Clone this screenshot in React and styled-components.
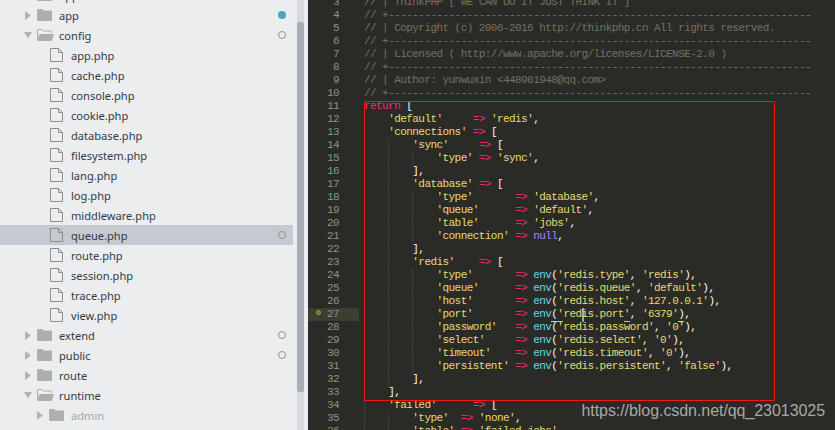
import React from 'react'
import styled, { createGlobalStyle } from 'styled-components'

const CHAR = 6.04

const GlobalStyle = createGlobalStyle`
  html, body { margin: 0; padding: 0; height: 100%; overflow: hidden; }
  #root { height: 100%; }
`

const Page = styled.div`
  display: flex;
  height: 430px;
  overflow: hidden;
`

// sidebar
const Sidebar = styled.aside`
  display: flex;
  flex: 0 0 308px;
  background: #ebedef;
  overflow: hidden;
`
const Tree = styled.ul`
  flex: 1;
  list-style: none;
  margin: -15px 4px 0 0;
  padding: 0;
  font-family: "Noto Sans", sans-serif;
  font-size: 11.1px;
  color: #333a48;
`
const Row = styled.li`
  display: flex;
  align-items: center;
  height: 20px;
  padding: 0 7px 0 ${props => 25 + props.$depth * 12}px;
  background: ${props => (props.$active ? '#c5c9d0' : 'transparent')};
  color: ${props => (props.$muted ? '#a2a5aa' : 'inherit')};
`
const ArrowSlot = styled.span`
  display: flex;
  align-items: center;
  flex: 0 0 12px;
`
const IconSlot = styled.span`
  display: flex;
  align-items: center;
  flex: 0 0 22px;
`
const Status = styled.span`
  box-sizing: border-box;
  width: 8px;
  height: 8px;
  margin-left: auto;
  border-radius: 50%;
  background: ${props => (props.$kind === 'new' ? '#4ba7bc' : 'transparent')};
  border: ${props => (props.$kind === 'new' ? 'none' : '1.5px solid #8f9091')};
`
const ScrollTrack = styled.div`
  flex: 0 0 7px;
  margin-right: 4px;
  background: #d8dadd;
`
const ScrollThumb = styled.div`
  height: 370px;
  margin-top: 22px;
  border-radius: 2px;
  background: #a9adb5;
`

const ArrowRight = () => (
  <svg width="7" height="9" viewBox="0 0 7 9"><path d="M0 0 L6 4.5 L0 9 Z" fill="#b3b3b3" /></svg>
)
const ArrowDown = () => (
  <svg width="8" height="7" viewBox="0 0 8 7" style={{ marginLeft: -1 }}><path d="M0 0 H8 L4 6.5 Z" fill="#b3b3b3" /></svg>
)
const FolderClosed = () => (
  <svg width="15" height="12" viewBox="0 0 15 12">
    <path d="M1 0 H5.5 L6.5 1.5 H14 Q15 1.5 15 2.5 V11 Q15 12 14 12 H1 Q0 12 0 11 V1 Q0 0 1 0 Z" fill="#aeaeae" />
  </svg>
)
const FolderOpen = () => (
  <svg width="17" height="12" viewBox="0 0 17 12">
    <path d="M.5 11 V1.2 Q.5 .5 1.2 .5 H5.3 L6.3 2 H13.5 Q14.5 2 14.5 3 V4" fill="none" stroke="#aeaeae" />
    <path d="M2.8 5 H16.5 Q17 5 16.8 5.6 L15 11.2 Q14.8 12 14 12 H1 Q.3 12 .6 11 L2 5.8 Q2.2 5 2.8 5 Z" fill="#aeaeae" />
  </svg>
)
const FileIcon = () => (
  <svg width="14" height="14" viewBox="0 0 14 14" style={{ marginLeft: 1 }}>
    <path d="M.5 .5 H8.5 L12.5 4.5 V13.5 H.5 Z M8.5 .5 V4.5 H12.5" fill="none" stroke="#8d8e90" />
  </svg>
)

const treeRows = [
  { name: 'application', type: 'closed', depth: 0 },
  { name: 'app', type: 'closed', depth: 0, status: 'new' },
  { name: 'config', type: 'open', depth: 0, status: 'changed' },
  { name: 'app.php', depth: 1 },
  { name: 'cache.php', depth: 1 },
  { name: 'console.php', depth: 1 },
  { name: 'cookie.php', depth: 1 },
  { name: 'database.php', depth: 1 },
  { name: 'filesystem.php', depth: 1 },
  { name: 'lang.php', depth: 1 },
  { name: 'log.php', depth: 1 },
  { name: 'middleware.php', depth: 1 },
  { name: 'queue.php', depth: 1, status: 'changed', active: true },
  { name: 'route.php', depth: 1 },
  { name: 'session.php', depth: 1 },
  { name: 'trace.php', depth: 1 },
  { name: 'view.php', depth: 1 },
  { name: 'extend', type: 'closed', depth: 0, status: 'changed' },
  { name: 'public', type: 'closed', depth: 0, status: 'changed' },
  { name: 'route', type: 'closed', depth: 0 },
  { name: 'runtime', type: 'open', depth: 0 },
  { name: 'admin', type: 'closed', depth: 1, muted: true },
]

// editor
const Editor = styled.main`
  position: relative;
  flex: 1;
  background: #2a2b26;
  overflow: hidden;
`
const Lines = styled.div`
  margin-top: -4px;
  font-family: "Liberation Mono", monospace;
  font-size: 11px;
  letter-spacing: -0.56px;
  line-height: 13px;
  white-space: pre;
`
const LineRow = styled.div`
  display: flex;
  height: 13px;
`
const Gutter = styled.div`
  position: relative;
  flex: 0 0 51px;
  box-sizing: border-box;
  padding-right: 20px;
  margin-right: 5px;
  text-align: right;
  color: #8f908a;
  background: ${props => (props.$current ? '#3e3d32' : 'transparent')};
`
const Marker = styled.svg`
  position: absolute;
  left: 8px;
  top: 2px;
`
const Guide = styled.span`
  display: inline-block;
  box-sizing: border-box;
  width: ${CHAR * 4}px;
  height: 13px;
  vertical-align: top;
  border-left: 1px dotted #4c4c45;
`
const tokenColors = {
  comment: '#75715e',
  string: '#e6db74',
  operator: '#f92672',
  support: '#66d9ef',
  constant: '#ae81ff',
  plain: '#f8f8f2',
}
const Tok = styled.span`
  color: ${props => tokenColors[props.$kind]};
`
const Match = styled.span`
  display: inline-block;
  line-height: 13px;
  box-shadow: 0 1px 0 ${props => props.$color};
`
const Caret = styled.span`
  display: inline-block;
  width: 2px;
  height: 14px;
  margin-right: -2px;
  vertical-align: top;
  background: #a5a5a0;
`
const RedBox = styled.div`
  position: absolute;
  left: 56px;
  top: 101px;
  box-sizing: border-box;
  width: 411px;
  height: 300px;
  border: 1px solid #f5180f;
  border-radius: 1px;
`
const Watermark = styled.div`
  position: absolute;
  right: 10px;
  top: 402px;
  font-family: "Liberation Sans", sans-serif;
  font-size: 16px;
  letter-spacing: -0.06px;
  line-height: 18px;
  color: #a8a8a8;
`

const DASHES = '// +' + '-'.repeat(70)

const source = [
  [3, 0, '// | ThinkPHP [ WE CAN DO IT JUST THINK IT ]'],
  [4, 0, DASHES],
  [5, 0, '// | Copyright (c) 2006-2016 http://thinkphp.cn All rights reserved.'],
  [6, 0, DASHES],
  [7, 0, '// | Licensed ( http://www.apache.org/licenses/LICENSE-2.0 )'],
  [8, 0, DASHES],
  [9, 0, '// | Author: yunwuxin <448901948@qq.com>'],
  [10, 0, DASHES],
  [11, 0, 'return ['],
  [12, 1, "'default'     => 'redis',"],
  [13, 1, "'connections' => ["],
  [14, 2, "'sync'     => ["],
  [15, 3, "'type' => 'sync',"],
  [16, 2, '],'],
  [17, 2, "'database' => ["],
  [18, 3, "'type'       => 'database',"],
  [19, 3, "'queue'      => 'default',"],
  [20, 3, "'table'      => 'jobs',"],
  [21, 3, "'connection' => null,"],
  [22, 2, '],'],
  [23, 2, "'redis'    => ["],
  [24, 3, "'type'       => env('redis.type', 'redis'),"],
  [25, 3, "'queue'      => env('redis.queue', 'default'),"],
  [26, 3, "'host'       => env('redis.host', '127.0.0.1'),"],
  [27, 3, null],
  [28, 3, "'password'   => env('redis.password', '0'),"],
  [29, 3, "'select'     => env('redis.select', '0'),"],
  [30, 3, "'timeout'    => env('redis.timeout', '0'),"],
  [31, 3, "'persistent' => env('redis.persistent', 'false'),"],
  [32, 2, '],'],
  [33, 1, '],'],
  [34, 1, "'failed'      => ["],
  [35, 2, "'type'  => 'none',"],
  [36, 2, "'table' => 'failed_jobs',"],
]

const tokenize = text => {
  if (text.startsWith('//')) return [{ kind: 'comment', text }]
  const parts = text.match(/'[^']*'|=>|\benv\b|\bnull\b|\breturn\b|[^'=]+?(?=$|'|=>|\benv\b|\bnull\b)/g) || []
  return parts.map(part => {
    if (part[0] === "'") return { kind: 'string', text: part }
    if (part === '=>' || part === 'return') return { kind: 'operator', text: part }
    if (part === 'env') return { kind: 'support', text: part }
    if (part === 'null') return { kind: 'constant', text: part }
    return { kind: 'plain', text: part }
  })
}

// line 27 has the caret and the bracket match underlines
const CurrentLine = () => (
  <>
    <Tok $kind="string">'port'</Tok>
    <Tok $kind="plain">       </Tok>
    <Tok $kind="operator">=&gt;</Tok>
    <Tok $kind="plain"> </Tok>
    <Tok $kind="support">env</Tok>
    <Match $color="#d8d8d0"><Tok $kind="plain">(</Tok></Match>
    <Match $color="#a6e22e"><Tok $kind="string">'</Tok></Match>
    <Tok $kind="string">red</Tok>
    <Caret />
    <Tok $kind="string">is.port</Tok>
    <Match $color="#a6e22e"><Tok $kind="string">'</Tok></Match>
    <Tok $kind="plain">, </Tok>
    <Tok $kind="string">'6379'</Tok>
    <Match $color="#d8d8d0"><Tok $kind="plain">)</Tok></Match>
    <Tok $kind="plain">,</Tok>
  </>
)

export default function App() {
  return (
    <>
      <GlobalStyle />
      <Page>
        <Sidebar>
          <Tree>
            {treeRows.map(row => (
              <Row key={row.name} $depth={row.depth} $active={row.active} $muted={row.muted}>
                <ArrowSlot>
                  {row.type === 'closed' && <ArrowRight />}
                  {row.type === 'open' && <ArrowDown />}
                </ArrowSlot>
                <IconSlot>
                  {row.type === 'closed' && <FolderClosed />}
                  {row.type === 'open' && <FolderOpen />}
                  {!row.type && <FileIcon />}
                </IconSlot>
                <span>{row.name}</span>
                {row.status && <Status $kind={row.status} />}
              </Row>
            ))}
          </Tree>
          <ScrollTrack>
            <ScrollThumb />
          </ScrollTrack>
        </Sidebar>
        <Editor>
          <Lines>
            {source.map(([number, indent, text]) => (
              <LineRow key={number}>
                <Gutter $current={number === 27}>
                  {number === 27 && (
                    <Marker width="5" height="5" viewBox="0 0 5 5">
                      <circle cx="2.5" cy="2.5" r="2" fill="#5f7a20" stroke="#8fb02a" />
                    </Marker>
                  )}
                  {number}
                </Gutter>
                <div>
                  {Array.from({ length: indent }, (_, i) => <Guide key={i} />)}
                  {text === null
                    ? <CurrentLine />
                    : tokenize(text).map((tok, i) => <Tok key={i} $kind={tok.kind}>{tok.text}</Tok>)}
                </div>
              </LineRow>
            ))}
          </Lines>
          <RedBox />
          <Watermark>https://blog.csdn.net/qq_23013025</Watermark>
        </Editor>
      </Page>
    </>
  )
}
